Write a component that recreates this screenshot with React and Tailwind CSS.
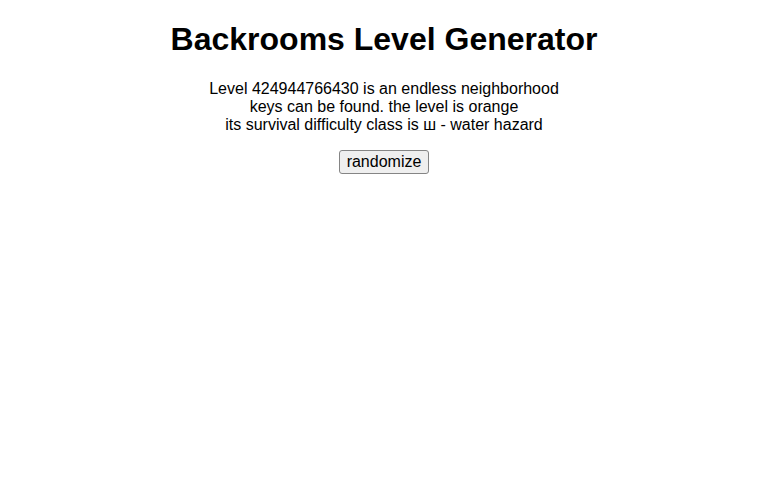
export default function App() {
  return (
    <div className="min-h-screen bg-white text-center text-black" style={{ fontFamily: '"Liberation Sans", Arial, sans-serif' }}>
      <h1 className="pt-[21px] pb-[22px] text-[32px] leading-[37px] font-bold">Backrooms Level Generator</h1>
      <p className="text-base leading-[18px]">
        Level 424944766430 is an endless neighborhood
        <br />
        keys can be found. the level is orange
        <br />
        its survival difficulty class is ш - water hazard
      </p>
      <div className="mt-4">
        <button className="rounded-[3px] border border-[#858585] bg-[#efefef] px-[7px] py-[1px] text-base leading-[20px] text-black">
          randomize
        </button>
      </div>
    </div>
  );
}
